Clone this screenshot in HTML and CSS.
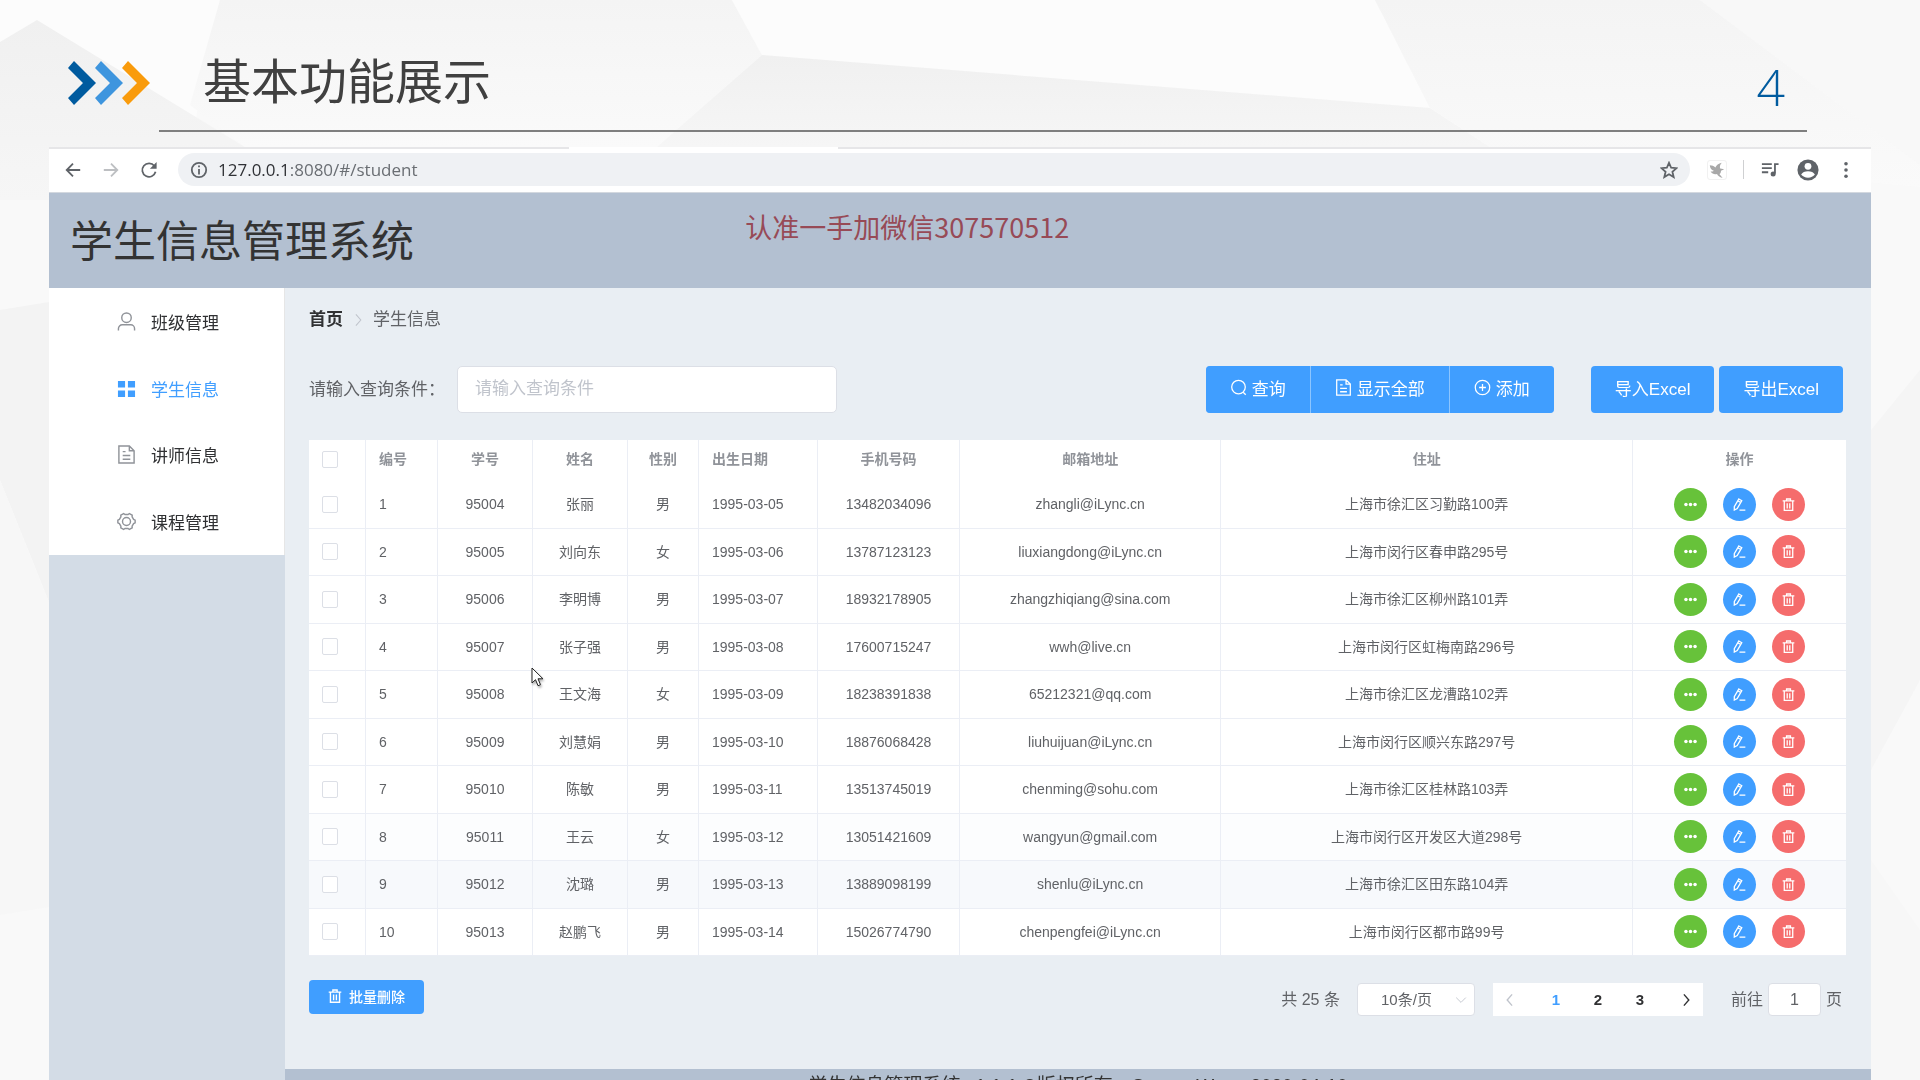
FILE: index.html
```html
<!DOCTYPE html>
<html lang="zh-CN">
<head>
    <meta charset="UTF-8">
    <meta name="viewport" content="width=device-width, initial-scale=1.0">
    <title>学生信息管理系统</title>
    <link rel="stylesheet" href="styles.css">
</head>
<body>
    <!-- icon set -->
    <svg class="symbols" aria-hidden="true">
        <symbol id="i-user" viewBox="0 0 20 20"><circle cx="10" cy="6" r="5"/><path d="M1.500 19.500v-2a4 4 0 0 1 4-4h9a4 4 0 0 1 4 4v2"/></symbol>
        <symbol id="i-menu" viewBox="0 0 20 20"><path fill="currentColor" stroke="none" d="M1 2h7.500v7H1zM11.500 2H19v7h-7.500zM1 12h7.500v7H1zM11.500 12H19v7h-7.500z"/></symbol>
        <symbol id="i-doc" viewBox="0 0 20 20"><path d="M2 1h11l5 5v13H2zM13 1v5h5M6 7h3M6 11h8M6 15h8"/></symbol>
        <symbol id="i-gear" viewBox="0 0 20 20"><path d="M7 1.600l1.400 1h3.200l1.400-1 3 1.700-.1 1.800 1.600 2.700 1.600.8v2.800l-1.600.8-1.600 2.700.1 1.800-3 1.700-1.400-1H8.400l-1.400 1-3-1.700.1-1.800-1.600-2.700-1.600-.8V8.600l1.600-.8 1.600-2.700L4 3.300z"/><circle cx="10" cy="10" r="4.200"/></symbol>
        <symbol id="i-search" viewBox="0 0 20 20"><circle cx="10" cy="9.500" r="8"/><path d="M15.500 15.500l3 3"/></symbol>
        <symbol id="i-plus" viewBox="0 0 20 20"><circle cx="10" cy="10" r="8.500"/><path d="M10 6v8M6 10h8"/></symbol>
        <symbol id="i-trash" viewBox="0 0 20 20"><path d="M1 4.500h18M3.500 4.500v14.500h13V4.500M7 4.500V1.500h6v3M8 8v8M12 8v8"/></symbol>
        <symbol id="i-edit" viewBox="0 0 20 20"><path d="M9 1.500l4.500 2.600-7 12-4.500 2.400V13.500zM7.500 4.500l4.500 2.500M10 18.500h9"/></symbol>
        <symbol id="i-more" viewBox="0 0 20 20"><g fill="currentColor" stroke="none"><circle cx="3" cy="10" r="2.700"/><circle cx="10" cy="10" r="2.700"/><circle cx="17" cy="10" r="2.700"/></g></symbol>
        <symbol id="i-left" viewBox="0 0 20 20"><path d="M13 2l-7 8 7 8"/></symbol>
        <symbol id="i-right" viewBox="0 0 20 20"><path d="M7 2l7 8-7 8"/></symbol>
        <symbol id="i-down" viewBox="0 0 20 20"><path d="M2 6l8 8 8-8"/></symbol>
    </svg>

    <!-- low-poly paper background -->
    <svg class="backdrop" viewBox="0 0 1920 1080" preserveAspectRatio="none" aria-hidden="true">
        <linearGradient id="shade" x1="0" y1="0" x2="0" y2="1"><stop offset="0" stop-color="#f0f0f0"/><stop offset="1" stop-color="#f6f6f6"/></linearGradient>
        <linearGradient id="fade" x1="0" y1="0" x2="0" y2="1"><stop offset="0" stop-color="#f4f4f4"/><stop offset="1" stop-color="#fafafa"/></linearGradient>
        <path fill="#fcfcfc" d="M0 0h220l-30 147H0z"/>
        <path fill="url(#shade)" d="M0 42l37-22 208 127v53H0z"/>
        <path fill="url(#fade)" d="M220 0h512l30 55-105 92H245l-55-42z"/>
        <path fill="#fcfcfc" d="M732 0h643l55 108L762 55z"/>
        <path fill="url(#shade)" d="M762 55l668 53 60 39H657z"/>
        <path fill="url(#fade)" d="M1375 0h325l220 165v22l-430-40-60-39z"/>
        <path fill="#f8f8f8" d="M1700 0h220v165z"/>
        <path fill="#f3f3f3" d="M0 310l49-8v300L0 480z"/>
        <path fill="#f7f7f7" d="M0 480l49 122v305L0 915z"/>
        <path fill="#f5f5f5" d="M1871 430l49-60v310l-49 90z"/>
        <path fill="#f7f7f7" d="M1871 860l49 70v150h-49z"/>
    </svg>

    <header class="slide-head">
        <svg class="chevrons" viewBox="0 0 82 44" aria-hidden="true">
            <path fill="#005b9f" d="M0 7l6-7 22 22L6 44l-6-7 15-15z"/>
            <path fill="#3e95de" d="M27 7l6-7 22 22-22 22-6-7 15-15z"/>
            <path fill="#f99b0c" d="M54 7l6-7 22 22-22 22-6-7 15-15z"/>
        </svg>
        <h1>基本功能展示</h1>
        <span class="page-no">4</span>
    </header>
    <hr class="rule">

    <div class="browser">
        <div class="tab-edge"><span class="tab"></span></div>
        <div class="toolbar">
            <button class="tool" aria-label="后退"><svg viewBox="0 0 20 20"><path d="M18 10H3M10 3l-7 7 7 7"/></svg></button>
            <button class="tool off" aria-label="前进"><svg viewBox="0 0 20 20"><path d="M2 10h15M10 3l7 7-7 7"/></svg></button>
            <button class="tool" aria-label="刷新"><svg viewBox="0 0 20 20"><path d="M16 5.500A7.500 7.500 0 1 0 17.300 12"/><path fill="currentColor" stroke="none" d="M18.500 1v7.500H11z"/></svg></button>
            <div class="address">
                <svg viewBox="0 0 20 20"><circle cx="10" cy="10" r="8"/><path d="M10 9v6M10 5v2"/></svg>
                <span class="url"><b>127.0.0.1</b>:8080/#/student</span>
                <svg class="star" viewBox="0 0 20 20"><path d="M10 2l2.400 5.500 5.900.5-4.500 3.900 1.400 5.900L10 14.700l-5.200 3.100 1.400-5.900L1.700 8l5.900-.5z"/></svg>
            </div>
            <svg class="bird" viewBox="0 0 20 20"><path d="M1 4c3 0 5 1 7 3 1-3 4-5 8-6-2 2-3 5-2 7l5 1-4 2c0 2-1 4-2 4l4 5c-4-1-6-3-7-5-3 1-6 0-8-3 2 0 3 0 4-1-3-1-5-4-5-7z"/></svg>
            <span class="sep"></span>
            <div class="tools-right">
                <button class="tool" aria-label="媒体"><svg viewBox="0 0 20 20"><path d="M1 3.500h11M1 8h11M1 12.500h7M15.500 14V3.500h4"/><circle cx="13.500" cy="14.500" r="2.800" fill="currentColor" stroke="none"/></svg></button>
                <button class="tool avatar" aria-label="用户"><svg viewBox="0 0 24 24"><circle cx="12" cy="12" r="11.500" fill="currentColor" stroke="none"/><circle cx="12" cy="8" r="3.700" fill="#fff" stroke="none"/><path fill="#fff" stroke="none" d="M4.500 17c2-5 13-5 15 0-3 4.500-12 4.500-15 0z"/></svg></button>
                <button class="tool" aria-label="更多"><svg viewBox="0 0 20 20"><g fill="currentColor" stroke="none"><circle cx="10" cy="3" r="2"/><circle cx="10" cy="10" r="2"/><circle cx="10" cy="17" r="2"/></g></svg></button>
            </div>
        </div>

        <div class="app">
            <header class="app-head">
                <h2>学生信息管理系统</h2>
                <span class="watermark">认准一手加微信307570512</span>
            </header>

            <div class="app-body">
                <aside>
                    <nav class="menu">
                        <a href="#/class"><svg><use href="#i-user"/></svg>班级管理</a>
                        <a href="#/student" class="active"><svg><use href="#i-menu"/></svg>学生信息</a>
                        <a href="#/teacher"><svg><use href="#i-doc"/></svg>讲师信息</a>
                        <a href="#/course"><svg><use href="#i-gear"/></svg>课程管理</a>
                    </nav>
                </aside>

                <div class="content">
                    <main>
                        <div class="breadcrumb">
                            <a href="#/">首页</a>
                            <svg><use href="#i-right"/></svg>
                            <span>学生信息</span>
                        </div>

                        <form class="search">
                            <label for="query">请输入查询条件：</label>
                            <input type="text" id="query" placeholder="请输入查询条件">
                            <div class="btn-group">
                                <button type="button" class="btn"><svg><use href="#i-search"/></svg>查询</button>
                                <button type="button" class="btn"><svg><use href="#i-doc"/></svg>显示全部</button>
                                <button type="button" class="btn"><svg><use href="#i-plus"/></svg>添加</button>
                            </div>
                            <div class="excel">
                                <button type="button" class="btn">导入Excel</button>
                                <button type="button" class="btn">导出Excel</button>
                            </div>
                        </form>

                        <table>
                            <colgroup>
                                <col class="w-check"><col class="w-no"><col class="w-id"><col class="w-id"><col class="w-sex">
                                <col class="w-birth"><col class="w-phone"><col class="w-mail"><col class="w-addr"><col class="w-act">
                            </colgroup>
                            <thead>
                                <tr>
                                    <th class="left"><input type="checkbox" aria-label="全选"></th>
                                    <th class="left">编号</th>
                                    <th>学号</th>
                                    <th>姓名</th>
                                    <th>性别</th>
                                    <th class="left">出生日期</th>
                                    <th>手机号码</th>
                                    <th>邮箱地址</th>
                                    <th>住址</th>
                                    <th>操作</th>
                                </tr>
                            </thead>
                            <tbody id="rows"></tbody>
                        </table>

                        <div class="bottom">
                            <button class="btn small"><svg><use href="#i-trash"/></svg>批量删除</button>
                            <div class="pagination">
                                <span>共 25 条</span>
                                <div class="size">
                                    <select aria-label="每页条数">
                                        <option>10条/页</option>
                                        <option>20条/页</option>
                                    </select>
                                    <svg><use href="#i-down"/></svg>
                                </div>
                                <div class="pager">
                                    <button class="prev" aria-label="上一页" disabled><svg><use href="#i-left"/></svg></button>
                                    <button class="current">1</button>
                                    <button>2</button>
                                    <button>3</button>
                                    <button class="next" aria-label="下一页"><svg><use href="#i-right"/></svg></button>
                                </div>
                                <label class="jump">前往<input type="text" value="1">页</label>
                            </div>
                        </div>
                    </main>
                    <footer>学生信息管理系统 v1.1.1 ©版权所有　Steven Wang 2020-04-10</footer>
                </div>
            </div>
        </div>
    </div>

    <svg class="cursor" viewBox="0 0 13 20" aria-hidden="true"><path d="M1 1v15l3.500-3.300 2.500 6 2.500-1-2.500-5.900h5z"/></svg>

    <script>
        const students = [
            ['95004', '张丽', '男', '1995-03-05', '13482034096', 'zhangli@iLync.cn', '上海市徐汇区习勤路100弄'],
            ['95005', '刘向东', '女', '1995-03-06', '13787123123', 'liuxiangdong@iLync.cn', '上海市闵行区春申路295号'],
            ['95006', '李明博', '男', '1995-03-07', '18932178905', 'zhangzhiqiang@sina.com', '上海市徐汇区柳州路101弄'],
            ['95007', '张子强', '男', '1995-03-08', '17600715247', 'wwh@live.cn', '上海市闵行区虹梅南路296号'],
            ['95008', '王文海', '女', '1995-03-09', '18238391838', '65212321@qq.com', '上海市徐汇区龙漕路102弄'],
            ['95009', '刘慧娟', '男', '1995-03-10', '18876068428', 'liuhuijuan@iLync.cn', '上海市闵行区顺兴东路297号'],
            ['95010', '陈敏', '男', '1995-03-11', '13513745019', 'chenming@sohu.com', '上海市徐汇区桂林路103弄'],
            ['95011', '王云', '女', '1995-03-12', '13051421609', 'wangyun@gmail.com', '上海市闵行区开发区大道298号'],
            ['95012', '沈璐', '男', '1995-03-13', '13889098199', 'shenlu@iLync.cn', '上海市徐汇区田东路104弄'],
            ['95013', '赵鹏飞', '男', '1995-03-14', '15026774790', 'chenpengfei@iLync.cn', '上海市闵行区都市路99号']
        ];

        document.getElementById('rows').innerHTML = students.map((s, i) => `
            <tr>
                <td class="left"><input type="checkbox" aria-label="选择${s[1]}"></td>
                <td class="left">${i + 1}</td>
                <td>${s[0]}</td>
                <td>${s[1]}</td>
                <td>${s[2]}</td>
                <td class="left">${s[3]}</td>
                <td>${s[4]}</td>
                <td>${s[5]}</td>
                <td>${s[6]}</td>
                <td>
                    <div class="actions">
                        <button class="view" aria-label="查看"><svg><use href="#i-more"/></svg></button>
                        <button class="edit" aria-label="编辑"><svg><use href="#i-edit"/></svg></button>
                        <button class="remove" aria-label="删除"><svg><use href="#i-trash"/></svg></button>
                    </div>
                </td>
            </tr>`).join('');
    </script>
</body>
</html>
```
FILE: styles.css
```css
* {
    box-sizing: border-box;
}
body {
    margin: 0;
    height: 100vh;
    display: flex;
    flex-direction: column;
    overflow: hidden;
    background: #f9f9f9;
    color: #606266;
    font-family: "Liberation Sans", "Noto Sans CJK SC", sans-serif;
    font-size: 17px;
}
button, input, select {
    font-family: inherit;
    font-size: inherit;
    color: inherit;
}
button {
    border: none;
    padding: 0;
    background: none;
    cursor: pointer;
}
svg {
    display: block;
    flex: none;
    fill: none;
    stroke: currentColor;
    stroke-width: 1.5;
}
.symbols {
    position: absolute;
    width: 0;
    height: 0;
}
.backdrop {
    position: fixed;
    inset: 0;
    width: 100%;
    height: 100%;
    stroke: none;
    z-index: -1;
}

/* slide title */
.slide-head {
    display: flex;
    align-items: center;
    height: 130px;
    padding: 36px 135px 0 68px;
    flex: none;
}
.chevrons {
    width: 82px;
    height: 44px;
    stroke: none;
}
h1 {
    flex: 1;
    margin: 0 0 0 53px;
    color: #404040;
    font-size: 48px;
    font-weight: 400;
    line-height: 64px;
}
.page-no {
    padding-top: 8px;
    color: #005b9f;
    font-family: "Open Sans", "Noto Sans", sans-serif;
    font-size: 50px;
    font-weight: 300;
    line-height: 60px;
}
.rule {
    flex: none;
    width: auto;
    height: 2px;
    margin: 0 113px 15px 159px;
    border: none;
    background: #7f7f7f;
}

/* browser window */
.browser {
    flex: 1;
    min-height: 0;
    display: flex;
    flex-direction: column;
    margin: 0 49px;
}
.tab-edge {
    flex: none;
    height: 2px;
    padding-left: 520px;
    background: #e6e6e8;
}
.tab {
    display: block;
    width: 269px;
    height: 2px;
    background: #fff;
}
.toolbar {
    flex: none;
    display: flex;
    align-items: center;
    height: 44px;
    padding: 0 16px 2px 15px;
    background: #fff;
    border-bottom: 1px solid #d3d8df;
}
.tool {
    display: flex;
    margin-right: 20px;
    color: #5f6368;
}
.tool svg, .address svg {
    width: 18px;
    height: 18px;
    stroke-width: 2;
}
.tool.off {
    color: #bdbfc2;
}
.address {
    flex: 1;
    display: flex;
    align-items: center;
    height: 33px;
    padding: 0 12px;
    border-radius: 17px;
    background: #eff1f4;
    color: #5f6368;
}
.url {
    flex: 1;
    margin-left: 10px;
    color: #6a6e73;
    font-family: "Open Sans", "Noto Sans", sans-serif;
    line-height: 24px;
}
.url b {
    color: #303236;
    font-weight: 400;
}
.bird {
    width: 20px;
    height: 20px;
    margin-left: 17px;
    padding: 1px;
    fill: #a8a8a8;
    stroke: none;
    border: 1px solid #f1f1f1;
    border-radius: 3px;
}
.sep {
    width: 1px;
    height: 19px;
    margin: 0 17px 0 16px;
    background: #cfd0d2;
}
.tools-right {
    display: flex;
    align-items: center;
    gap: 18px;
}
.tools-right .tool {
    margin: 0;
}
.avatar svg {
    width: 22px;
    height: 22px;
}

/* app shell */
.app {
    flex: 1;
    min-height: 0;
    display: flex;
    flex-direction: column;
}
.app-head {
    position: relative;
    flex: none;
    height: 95px;
    padding: 18px 21px;
    background: #b3c0d1;
}
h2 {
    margin: 0;
    color: #333;
    font-size: 43px;
    font-weight: 400;
    line-height: 62px;
}
.watermark {
    position: absolute;
    top: 18px;
    left: 38%;
    padding-left: 4px;
    color: #974a56;
    font-family: "Noto Sans CJK SC", sans-serif;
    font-size: 27px;
    line-height: 32px;
}
.app-body {
    flex: 1;
    min-height: 0;
    display: flex;
}
aside {
    flex: none;
    width: 236px;
    background: #d3dce6;
}
.menu {
    display: grid;
    grid-template-rows: repeat(4, 1fr);
    height: 267px;
    background: #fff;
    border-right: 1px solid #e6e6e6;
}
.menu a {
    display: flex;
    align-items: center;
    gap: 15px;
    padding-left: 68px;
    color: #303133;
    text-decoration: none;
}
.menu svg {
    width: 19px;
    height: 19px;
    color: #909399;
}
.menu .active, .menu .active svg {
    color: #409eff;
}
.content {
    flex: 1;
    min-width: 0;
    background: #e9eef3;
}
main {
    padding: 20px 25px 53px 24px;
}
footer {
    height: 72px;
    padding-top: 1px;
    background: #b3c0d1;
    color: #333;
    font-size: 19px;
    line-height: 32px;
    text-align: center;
}

.breadcrumb {
    display: flex;
    align-items: center;
    line-height: 24px;
}
.breadcrumb a {
    color: #303133;
    font-weight: 700;
    text-decoration: none;
}
.breadcrumb svg {
    width: 14px;
    height: 14px;
    margin: 0 8px;
    color: #c0c4cc;
}

.search {
    display: flex;
    align-items: center;
    height: 48px;
    margin: 33px 3px 27px 0;
}
.search label {
    width: 148px;
    padding-bottom: 3px;
}
.search input {
    width: 380px;
    height: 47px;
    padding: 0 17px;
    border: 1px solid #dcdfe6;
    border-radius: 5px;
    background: #fff;
}
.search input::placeholder {
    color: #c0c4cc;
}
.btn {
    display: flex;
    align-items: center;
    justify-content: center;
    gap: 5px;
    height: 47px;
    padding: 0 24px 3px;
    border-radius: 4px;
    background: #409eff;
    color: #fff;
    white-space: nowrap;
}
.btn svg {
    width: 17px;
    height: 17px;
}
.btn-group {
    display: flex;
    gap: 1px;
    margin-left: auto;
    border-radius: 4px;
    background: #8cc5ff;
    overflow: hidden;
}
.btn-group .btn {
    border-radius: 0;
}
.excel {
    display: flex;
    gap: 5px;
    margin-left: 37px;
}

/* student table */
table {
    width: 100%;
    height: 516px;
    table-layout: fixed;
    border-collapse: separate;
    border-spacing: 0;
    background: #fff;
    font-size: 14px;
    line-height: 20px;
}
.w-check { width: 57px; }
.w-no { width: 72px; }
.w-id { width: 95px; }
.w-sex { width: 71px; }
.w-birth { width: 119px; }
.w-phone { width: 142px; }
.w-mail { width: 17%; }
.w-act { width: 213px; }
th, td {
    padding: 0;
    border-right: 1px solid #ebeef5;
    text-align: center;
    vertical-align: middle;
}
th {
    height: 41px;
    padding-bottom: 3px;
    color: #909399;
    font-weight: 700;
}
td {
    border-bottom: 1px solid #ebeef5;
}
th:last-child, td:last-child {
    border-right: none;
}
.left {
    padding-left: 13px;
    text-align: left;
}
tbody tr:nth-child(8) {
    background: #fcfdfe;
}
tbody tr:nth-child(9) {
    background: #f7f9fc;
}
th input, td input {
    appearance: none;
    display: block;
    width: 16px;
    height: 17px;
    margin: 0;
    border: 1px solid #dcdfe6;
    border-radius: 2px;
    background: #fff;
}
.actions {
    display: flex;
    justify-content: center;
    gap: 16px;
}
.actions button {
    display: flex;
    align-items: center;
    justify-content: center;
    width: 33px;
    height: 33px;
    border-radius: 50%;
    color: #fff;
}
.actions svg {
    width: 13px;
    height: 13px;
    stroke-width: 2;
}
.actions .view {
    background: #67c23a;
}
.actions .edit {
    background: #409eff;
}
.actions .remove {
    background: #f56c6c;
}

/* bottom bar */
.bottom {
    display: flex;
    justify-content: space-between;
    height: 36px;
    margin-top: 24px;
}
.small {
    height: 34px;
    padding: 0 19px 2px;
    gap: 7px;
    font-size: 14px;
    font-weight: 500;
}
.small svg {
    width: 14px;
    height: 14px;
    stroke-width: 2;
}
.pagination {
    display: flex;
    align-items: flex-end;
    padding-right: 4px;
    font-size: 16px;
    line-height: 33px;
}
.size {
    position: relative;
    margin: 0 18px 0 17px;
}
.size select {
    appearance: none;
    display: block;
    width: 118px;
    height: 33px;
    padding: 0 37px 0 18px;
    border: 1px solid #dcdfe6;
    border-radius: 4px;
    background: #fff;
    font-size: 15px;
    text-align: center;
    text-align-last: center;
}
.size svg {
    position: absolute;
    top: 11px;
    right: 8px;
    width: 12px;
    height: 12px;
    color: #c0c4cc;
    pointer-events: none;
}
.pager {
    display: flex;
    height: 33px;
    margin-right: 28px;
    background: #fff;
}
.pager button {
    width: 42px;
    color: #303133;
    font-size: 15px;
    font-weight: 700;
}
.pager svg {
    width: 14px;
    height: 14px;
    stroke-width: 2;
}
.pager .prev {
    padding-left: 10px;
    color: #c0c4cc;
}
.pager .next {
    padding-left: 18px;
}
.pager .current {
    color: #409eff;
}
.jump {
    display: flex;
}
.jump input {
    width: 53px;
    height: 33px;
    margin: 0 5px;
    border: 1px solid #dcdfe6;
    border-radius: 4px;
    background: #fff;
    text-align: center;
}

.cursor {
    position: fixed;
    top: 667px;
    left: 531px;
    width: 13px;
    height: 20px;
    fill: #fff;
    stroke: #222;
    stroke-width: 1;
    filter: drop-shadow(1px 2px 1px rgba(0,0,0,0.3));
}
```
